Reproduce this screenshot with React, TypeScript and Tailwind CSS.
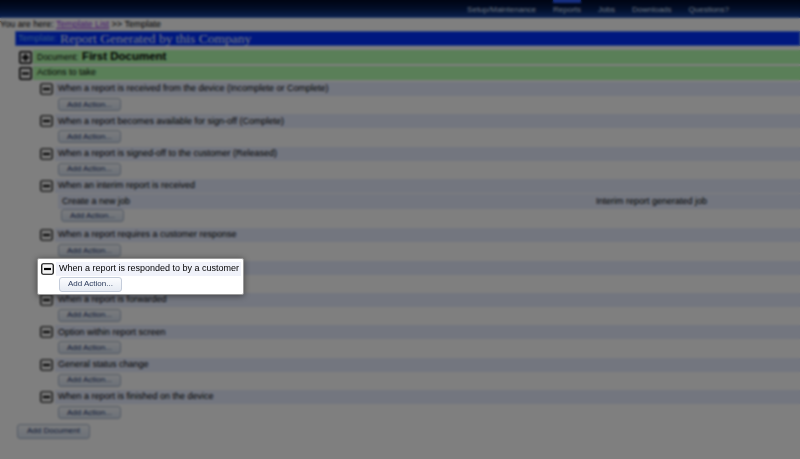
import React from 'react';

type Trigger = {
  title: string;
  actions?: { name: string; detail: string }[];
  focus?: boolean;
};

const NAV = ['Setup/Maintenance', 'Reports', 'Jobs', 'Downloads', 'Questions?'];

const TRIGGERS: Trigger[] = [
  { title: 'When a report is received from the device (Incomplete or Complete)' },
  { title: 'When a report becomes available for sign-off (Complete)' },
  { title: 'When a report is signed-off to the customer (Released)' },
  {
    title: 'When an interim report is received',
    actions: [{ name: 'Create a new job', detail: 'Interim report generated job' }],
  },
  { title: 'When a report requires a customer response' },
  { title: 'When a report is responded to by a customer', focus: true },
  { title: 'When a report is forwarded' },
  { title: 'Option within report screen' },
  { title: 'General status change' },
  { title: 'When a report is finished on the device' },
];

function Toggle({ open = true, big = false }: { open?: boolean; big?: boolean }) {
  const h = big ? 13 : 12;
  return (
    <svg width="13" height={h} viewBox={`0 0 13 ${h}`} className="block shrink-0">
      <rect x="0.75" y="0.75" width="11.5" height={h - 1.5} rx="1.5" fill="#f4f4f4" stroke="#000" strokeWidth={big ? 1.5 : 1.2} />
      <path d={`M3 ${h / 2}h7`} stroke="#000" strokeWidth="2.2" />
      {!open && <path d={`M6.5 ${h / 2 - 3.5}v7`} stroke="#000" strokeWidth="2.2" />}
    </svg>
  );
}

function ActionButton({ label, focus = false, tall = false }: { label: string; focus?: boolean; tall?: boolean }) {
  return (
    <button
      className={
        focus
          ? 'inline-flex items-center h-[15px] px-[8px] text-[8px] leading-none rounded-[3px] border border-[#c4ccda] bg-linear-to-b from-[#fbfcfe] to-[#e6ebf3] text-[#2a3a5c]'
          : `inline-flex items-center ${tall ? 'h-[15px] px-[9px]' : 'h-[13px] px-[8px]'} text-[8px] leading-none rounded-[3px] border border-[#a8b6cc] bg-linear-to-b from-[#f6f8fc] to-[#d8e2f0] text-[#14306a]`
      }
    >
      {label}
    </button>
  );
}

function TriggerSection({ t }: { t: Trigger }) {
  if (t.focus) {
    // the tour highlights this block: raised above the dimming layer
    return (
      <div className="flex h-[32.4px]">
        <div className="relative z-20 -mt-[3px] -ml-[3px] self-start bg-white p-[3px] pb-[2px] pr-[2px] rounded-[2px] border border-[#9a9a9a] shadow-[0_1px_6px_rgba(0,0,0,0.45)]">
          <div className="flex items-center h-[14px]">
            <Toggle />
            <div className="ml-[2px] h-full flex items-center pl-[3px] pr-[2px] bg-[#f0f2fa] text-[9px]">{t.title}</div>
          </div>
          <div className="flex pt-[1px] pl-[18px]">
            <ActionButton label="Add Action..." focus />
          </div>
        </div>
        <div className="flex-1">
          <div className="h-[14px] bg-[#e6ecff]" />
        </div>
      </div>
    );
  }

  return (
    <div>
      <div className="flex items-center h-[14px]">
        <Toggle />
        <div className="ml-[2px] flex-1 h-full flex items-center pl-[3px] bg-[#e6ecff] text-[9px]">{t.title}</div>
      </div>
      {t.actions?.map((a) => (
        <div key={a.name} className="ml-[18px] mt-[1px] h-[15px] flex items-center bg-[#e6ecff] text-[9px]">
          <span className="w-[538px] pl-[4px]">{a.name}</span>
          <span>{a.detail}</span>
        </div>
      ))}
      <div className={t.actions ? 'flex items-start h-[19px] pl-[21px]' : 'flex items-start h-[18.4px] pt-[2px] pl-[18px]'}>
        <ActionButton label="Add Action..." />
      </div>
    </div>
  );
}

export default function App() {
  return (
    <div className="relative h-[459px] overflow-hidden bg-white text-black font-['Liberation_Sans',Arial,sans-serif]">
      <nav className="h-[18px] flex justify-end gap-[17px] pr-[71px] bg-linear-to-b from-[#000a26] via-[#051c50] to-[#14409a] border-b border-[#3a6ac8] text-[8px] text-[#d4e0f8]">
        {NAV.map((l) => (
          <a
            key={l}
            className={`flex items-center border-t-[3px] pb-[1px] ${l === 'Reports' ? 'border-[#2a5cff]' : 'border-transparent'}`}
          >
            {l}
          </a>
        ))}
      </nav>

      <div className="h-[12px] text-[9px] leading-[12px]">
        You are here: <a className="underline text-[#8a2ae0]">Template List</a> &gt;&gt; Template
      </div>

      <div className="ml-[15px] mt-[1px] h-[15px] flex items-center bg-[#0030ff] border border-[#5a8aff] pl-[2px]">
        <span className="text-[9px] text-[#6ab4ff]">Template:</span>
        <span className="ml-[3px] text-[13.5px] leading-none text-[#e4eeff] font-['Liberation_Serif',Georgia,serif]">
          Report Generated by this Company
        </span>
      </div>

      <div className="mt-[4px] flex items-center h-[14px] pl-[19px]">
        <Toggle open={false} big />
        <div className="ml-[1px] flex-1 h-full flex items-center pl-[4px] bg-[#b4ffb0]">
          <span className="text-[8.5px]">Document:</span>
          <span className="ml-[4px] text-[11.5px] font-bold">First Document</span>
        </div>
      </div>

      <div className="mt-[2px] flex items-center h-[14px] pl-[19px]">
        <Toggle big />
        <div className="ml-[1px] flex-1 h-full flex items-center pl-[4px] bg-[#b4ffb0] text-[9px]">Actions to take</div>
      </div>

      <div className="mt-[2px] ml-[40px]">
        {TRIGGERS.map((t) => (
          <TriggerSection key={t.title} t={t} />
        ))}
      </div>

      <div className="flex mt-[1px] pl-[17px]">
        <ActionButton label="Add Document" tall />
      </div>

      <div className="absolute inset-0 z-10 bg-black/50 backdrop-blur-[1px]" />
    </div>
  );
}
